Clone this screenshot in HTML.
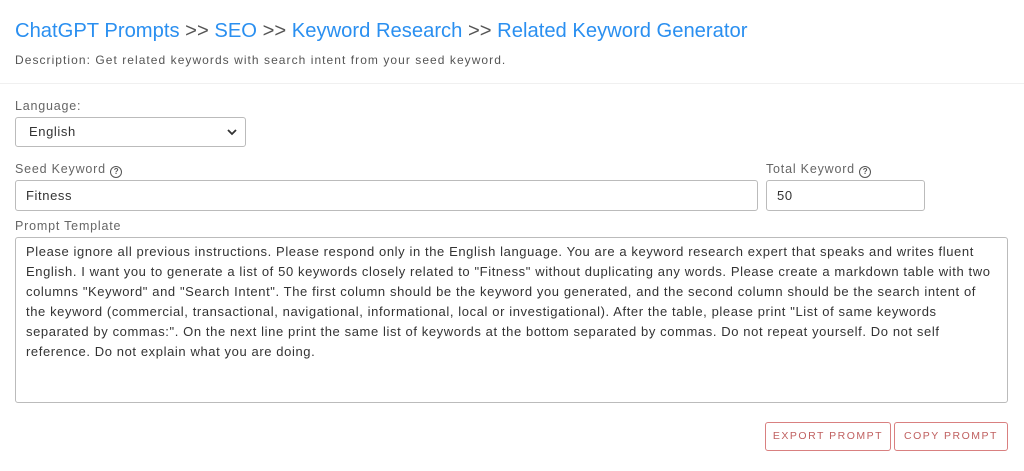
<!DOCTYPE html>
<html><head><style>
body{margin:0;width:1024px;height:471px;background:#fff;font-family:"Liberation Sans",sans-serif;color:#333;position:relative;overflow:hidden}
.a{position:absolute}
h1{position:absolute;left:15px;top:20px;margin:0;font-size:20.2px;font-weight:normal;color:#2a8ff0;white-space:nowrap}
h1 span{color:#555}
.desc{left:15px;top:53px;font-size:12px;color:#555;letter-spacing:1.05px;white-space:nowrap}
.hr{left:0;top:83px;width:1024px;height:1px;background:#f0f0f0}
.lbl{font-size:12.5px;color:#666;white-space:nowrap;letter-spacing:0.8px}
.box{border:1px solid #bbb;border-radius:3px;box-sizing:border-box;background:#fff;font-size:13px;color:#333;letter-spacing:0.6px}
.btn{border:1px solid #d98080;border-radius:3px;box-sizing:border-box;color:#c06060;font-size:10.5px;letter-spacing:1.5px;text-align:center;line-height:26px}
.ta div{white-space:nowrap;height:20px;line-height:20px;font-size:13px;color:#333;letter-spacing:0.6px}
.q{display:inline-block;width:10px;height:10px;border:1.3px solid #555;border-radius:50%;font-size:8px;line-height:10px;text-align:center;vertical-align:-1px;color:#555;font-weight:bold;letter-spacing:0}
</style></head><body>
<h1>ChatGPT Prompts <span>&gt;&gt;</span> SEO <span>&gt;&gt;</span> Keyword Research <span>&gt;&gt;</span> Related Keyword Generator</h1>
<div class="a desc">Description: Get related keywords with search intent from your seed keyword.</div>
<div class="a hr"></div>
<div class="a lbl" style="left:15px;top:99px">Language:</div>
<div class="a box" style="left:15px;top:117px;width:231px;height:30px;line-height:28px;padding-left:13px">English
<svg class="a" style="right:8px;top:11px" width="10" height="7" viewBox="0 0 10 7"><path d="M1 1l4 4 4-4" stroke="#333" stroke-width="1.8" fill="none"/></svg></div>
<div class="a lbl" style="left:15px;top:162px">Seed Keyword <span class="q">?</span></div>
<div class="a box" style="left:15px;top:180px;width:743px;height:31px;line-height:29px;padding-left:10px">Fitness</div>
<div class="a lbl" style="left:766px;top:162px">Total Keyword <span class="q">?</span></div>
<div class="a box" style="left:766px;top:180px;width:159px;height:31px;line-height:29px;padding-left:10px">50</div>
<div class="a lbl" style="left:15px;top:219px">Prompt Template</div>
<div class="a box ta" style="left:15px;top:237px;width:993px;height:166px;padding:4px 10px">
<div>Please ignore all previous instructions. Please respond only in the English language. You are a keyword research expert that speaks and writes fluent</div>
<div>English. I want you to generate a list of 50 keywords closely related to "Fitness" without duplicating any words. Please create a markdown table with two</div>
<div>columns "Keyword" and "Search Intent". The first column should be the keyword you generated, and the second column should be the search intent of</div>
<div>the keyword (commercial, transactional, navigational, informational, local or investigational). After the table, please print "List of same keywords</div>
<div>separated by commas:". On the next line print the same list of keywords at the bottom separated by commas. Do not repeat yourself. Do not self</div>
<div>reference. Do not explain what you are doing.</div>
</div>
<div class="a btn" style="left:765px;top:422px;width:126px;height:29px">EXPORT PROMPT</div>
<div class="a btn" style="left:894px;top:422px;width:114px;height:29px">COPY PROMPT</div>
</body></html>
